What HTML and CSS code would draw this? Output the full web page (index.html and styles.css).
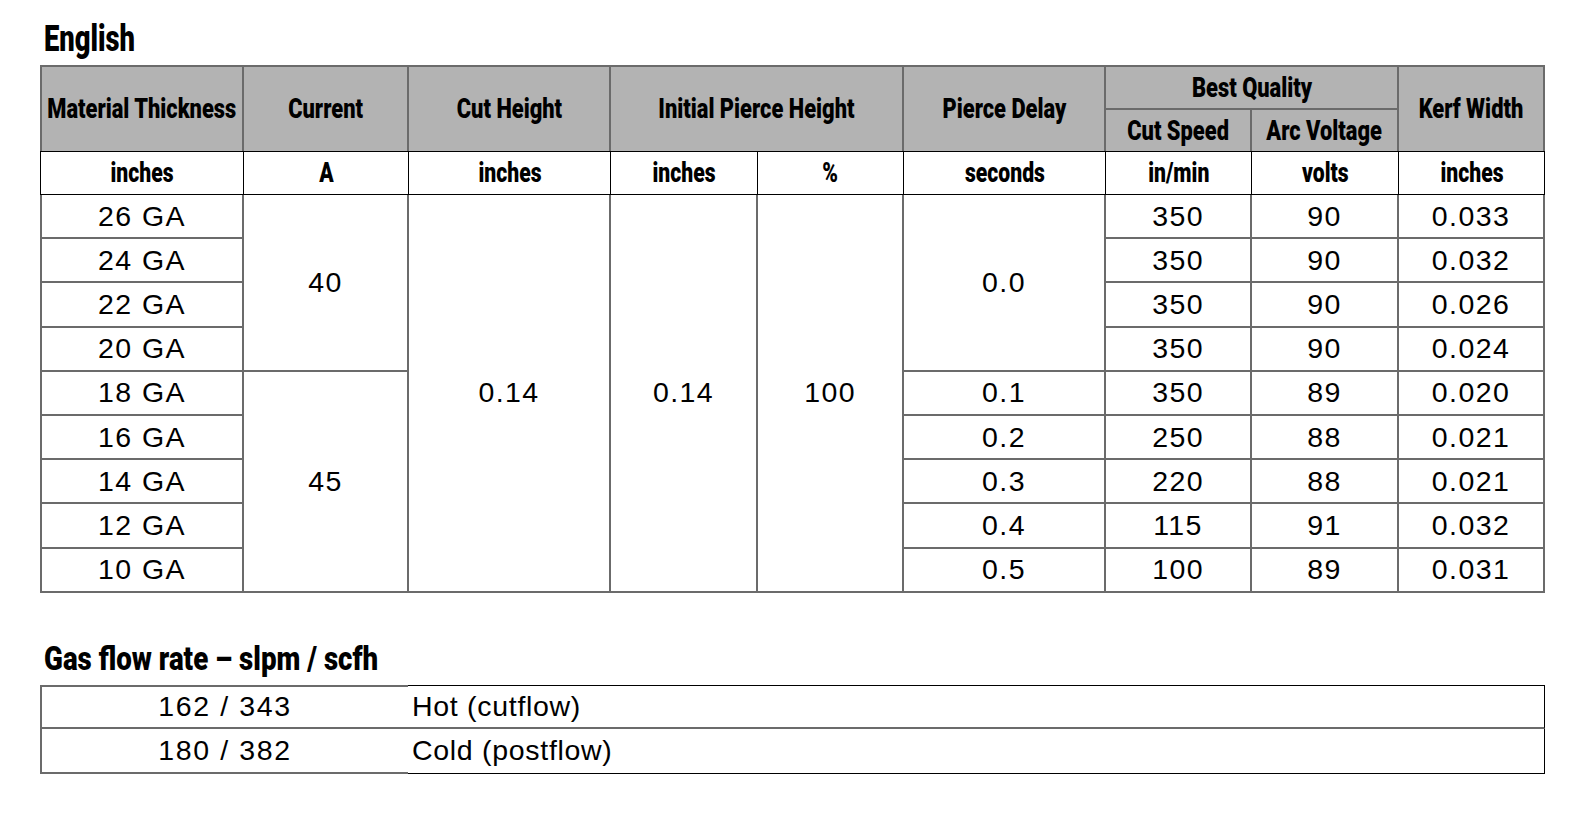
FILE: index.html
```html
<!DOCTYPE html>
<html>
<head>
<meta charset="utf-8">
<link rel="stylesheet" href="styles.css">
</head>
<body>
<div class="page">
  <h2 class="title title-en"><span class="cond">English</span></h2>
  <table class="cut">
    <colgroup>
      <col class="w204"><col class="w165"><col class="w202"><col class="w147"><col class="w146"><col class="w202"><col class="w146"><col class="w147"><col class="w146">
    </colgroup>
    <thead>
      <tr class="h1">
        <th rowspan="2" class="first"><div class="fit"><span class="cond">Material Thickness</span></div></th>
        <th rowspan="2"><div class="fit"><span class="cond">Current</span></div></th>
        <th rowspan="2"><div class="fit"><span class="cond">Cut Height</span></div></th>
        <th rowspan="2" colspan="2"><div class="fit"><span class="cond">Initial Pierce Height</span></div></th>
        <th rowspan="2"><div class="fit"><span class="cond">Pierce Delay</span></div></th>
        <th colspan="2"><div class="fit"><span class="cond">Best Quality</span></div></th>
        <th rowspan="2"><div class="fit"><span class="cond">Kerf Width</span></div></th>
      </tr>
      <tr class="h2">
        <th><div class="fit"><span class="cond">Cut Speed</span></div></th>
        <th><div class="fit"><span class="cond">Arc Voltage</span></div></th>
      </tr>
      <tr class="units">
        <td class="first"><div class="fit"><span class="cond">inches</span></div></td>
        <td><div class="fit"><span class="cond">A</span></div></td>
        <td><div class="fit"><span class="cond">inches</span></div></td>
        <td><div class="fit"><span class="cond">inches</span></div></td>
        <td><div class="fit"><span class="cond">%</span></div></td>
        <td><div class="fit"><span class="cond">seconds</span></div></td>
        <td><div class="fit"><span class="cond">in/min</span></div></td>
        <td><div class="fit"><span class="cond">volts</span></div></td>
        <td><div class="fit"><span class="cond">inches</span></div></td>
      </tr>
    </thead>
    <tbody>
      <tr><td class="first">26 GA</td><td rowspan="4">40</td><td rowspan="9">0.14</td><td rowspan="9">0.14</td><td rowspan="9">100</td><td rowspan="4">0.0</td><td>350</td><td>90</td><td>0.033</td></tr>
      <tr><td class="first">24 GA</td><td>350</td><td>90</td><td>0.032</td></tr>
      <tr><td class="first">22 GA</td><td>350</td><td>90</td><td>0.026</td></tr>
      <tr><td class="first">20 GA</td><td>350</td><td>90</td><td>0.024</td></tr>
      <tr><td class="first">18 GA</td><td rowspan="5">45</td><td>0.1</td><td>350</td><td>89</td><td>0.020</td></tr>
      <tr><td class="first">16 GA</td><td>0.2</td><td>250</td><td>88</td><td>0.021</td></tr>
      <tr><td class="first">14 GA</td><td>0.3</td><td>220</td><td>88</td><td>0.021</td></tr>
      <tr><td class="first">12 GA</td><td>0.4</td><td>115</td><td>91</td><td>0.032</td></tr>
      <tr><td class="first">10 GA</td><td>0.5</td><td>100</td><td>89</td><td>0.031</td></tr>
    </tbody>
  </table>

  <h2 class="title title-gas"><span class="cond">Gas flow rate – slpm / scfh</span></h2>
  <table class="gas">
    <colgroup><col class="g1"><col class="g2"></colgroup>
    <tr><td class="val">162 / 343</td><td class="lbl">Hot (cutflow)</td></tr>
    <tr><td class="val">180 / 382</td><td class="lbl">Cold (postflow)</td></tr>
  </table>
</div>
</body>
</html>
```

FILE: styles.css
```css
html, body {
  margin: 0;
  padding: 0;
  background: #ffffff;
}

.page {
  padding: 17px 0 0 40px;
  width: 1520px;
  font-family: "Liberation Sans", Arial, sans-serif;
  color: #000;
}

/* condensed heading face: Roboto compressed horizontally */
.cond {
  display: inline-block;
  white-space: nowrap;
  font-family: Roboto, "Liberation Sans", sans-serif;
  font-weight: 900;
  transform: scaleX(0.77);
  transform-origin: center;
}

.fit {
  display: flex;
  justify-content: center;
  align-items: center;
}

.title {
  margin: 0;
  font-weight: normal;
  white-space: nowrap;
}

.title .cond {
  transform-origin: left center;
}

.title-en {
  font-size: 36.5px;
  line-height: 44px;
  margin: 0 0 4px 4px;
}

.title-en .cond { transform: scaleX(0.75); }

.title-gas {
  font-size: 32.6px;
  line-height: 40px;
  margin: 46px 0 6px 4px;
}

.title-gas .cond { transform: scaleX(0.85); }

/* main table */
.cut {
  border-collapse: separate;
  border-spacing: 0;
  table-layout: fixed;
  width: 1505px;
}

.w204 { width: 204px; }
.w165 { width: 165px; }
.w202 { width: 202px; }
.w146 { width: 146px; }
.w147 { width: 147px; }

.cut th,
.cut td {
  padding: 0;
  text-align: center;
  vertical-align: middle;
}

.cut th {
  background: #b3b3b3;
  border-top: 2px solid #6b6b6b;
  border-right: 2px solid #6b6b6b;
  font-size: 28.4px;
}

.cut th.first { border-left: 2px solid #6b6b6b; }

.cut .h1 { height: 43px; }
.cut .h2 { height: 42.5px; }

.cut .units { height: 44.5px; }

.cut .units td {
  border-top: 1.5px solid #000;
  border-right: 1.5px solid #000;
  border-bottom: 1.5px solid #000;
  font-size: 27.5px;
}

.cut .units td.first { border-left: 1.5px solid #000; }

.cut tbody tr { height: 44.2px; }

.cut tbody td {
  border-right: 2px solid #6b6b6b;
  border-bottom: 2px solid #6b6b6b;
  font-size: 28.5px;
  letter-spacing: 1.4px;
}

.cut tbody td.first { border-left: 2px solid #6b6b6b; }

/* gas flow table */
.gas {
  border-collapse: separate;
  border-spacing: 0;
  table-layout: fixed;
  width: 1505px;
}

.g1 { width: 368px; }

.gas tr { height: 44.5px; }

.gas td {
  padding: 0;
  font-size: 28.5px;
  letter-spacing: 0.7px;
  vertical-align: middle;
}

.gas .val {
  text-align: center;
  letter-spacing: 1.6px;
  border-left: 2px solid #6b6b6b;
  border-bottom: 2px solid #6b6b6b;
}

.gas tr:first-child .val { border-top: 2px solid #6b6b6b; }

.gas .lbl {
  text-align: left;
  padding-left: 4px;
  border-right: 1.5px solid #000;
  border-bottom: 2px solid #6b6b6b;
}

.gas tr:first-child .lbl { border-top: 1.5px solid #000; }
.gas tr:last-child .lbl { border-bottom: 1.5px solid #000; }
```
